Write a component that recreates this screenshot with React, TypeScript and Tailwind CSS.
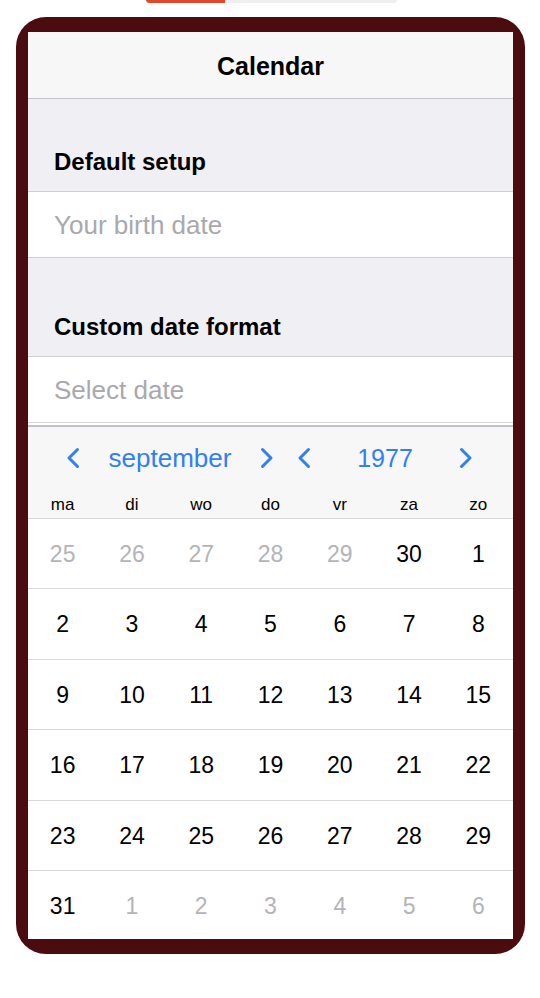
const WEEKDAYS = ['ma', 'di', 'wo', 'do', 'vr', 'za', 'zo'];

// [day, inCurrentMonth]
const WEEKS: [number, boolean][][] = [
  [[25, false], [26, false], [27, false], [28, false], [29, false], [30, true], [1, true]],
  [[2, true], [3, true], [4, true], [5, true], [6, true], [7, true], [8, true]],
  [[9, true], [10, true], [11, true], [12, true], [13, true], [14, true], [15, true]],
  [[16, true], [17, true], [18, true], [19, true], [20, true], [21, true], [22, true]],
  [[23, true], [24, true], [25, true], [26, true], [27, true], [28, true], [29, true]],
  [[31, true], [1, false], [2, false], [3, false], [4, false], [5, false], [6, false]],
];

const ROW_HEIGHTS = ['h-[70px]', 'h-[71px]', 'h-[70px]', 'h-[71px]', 'h-[70px]', 'h-[70px]'];

function Chevron({ dir }: { dir: 'left' | 'right' }) {
  return (
    <button className="w-[30px] h-[30px] flex items-center justify-center shrink-0">
      <svg width="14" height="22" viewBox="0 0 14 22" fill="none">
        <polyline
          points={dir === 'left' ? '11.5,2.5 3,11 11.5,19.5' : '2.5,2.5 11,11 2.5,19.5'}
          stroke="#2f7ff5"
          strokeWidth="3"
          strokeLinecap="round"
          strokeLinejoin="round"
        />
      </svg>
    </button>
  );
}

function SectionHeader({ title, tall }: { title: string; tall?: boolean }) {
  return (
    <div
      className={`${tall ? 'h-[99px]' : 'h-[93px]'} shrink-0 bg-[#efeff4] border-b border-[#cfcfd3] flex items-end px-[26px] pb-[15px]`}
    >
      <span className="text-[24px] leading-[28px] font-bold text-black">{title}</span>
    </div>
  );
}

function InputRow({ placeholder, last }: { placeholder: string; last?: boolean }) {
  return (
    <div className={`h-[66px] shrink-0 bg-white flex items-center px-[26px] ${last ? 'border-b border-[#d6d6d9]' : 'border-b border-[#cfcfd3]'}`}>
      <span className="text-[26px] leading-[30px] text-[#a9a9ad]">{placeholder}</span>
    </div>
  );
}

export default function App() {
  return (
    <div className="min-h-[998px] bg-white" style={{ fontFamily: '"Liberation Sans", Arial, sans-serif' }}>
      {/* partial bar peeking in from above */}
      <div className="ml-[146px] w-[251px] h-[3px] flex rounded-b-full overflow-hidden">
        <div className="w-[79px] bg-[#e3472b] rounded-bl-full" />
        <div className="flex-1 bg-[#efefef]" />
      </div>

      {/* device frame */}
      <div className="ml-[16px] mt-[14px] w-[509px] rounded-[30px] bg-[#4a0c0e] px-[12px] py-[15px]">
        <div className="h-[907px] bg-white overflow-hidden flex flex-col">
          <div className="h-[67px] shrink-0 bg-[#f7f7f7] border-b border-[#c4c4c8] flex items-center justify-center pt-[2px]">
            <span className="text-[25px] leading-[30px] font-bold text-black">Calendar</span>
          </div>

          <SectionHeader title="Default setup" />
          <InputRow placeholder="Your birth date" />
          <SectionHeader title="Custom date format" tall />
          <InputRow placeholder="Select date" last />

          <div className="h-[4px] shrink-0 bg-white border-b-2 border-[#c2c2c6]" />

          {/* calendar */}
          <div className="bg-[#f7f7f7] border-b border-[#d8d8da] shrink-0">
            <div className="h-[62px] flex items-center pl-[30px]">
              <Chevron dir="left" />
              <div className="w-[164px] text-center text-[26px] leading-[30px] text-[#2f7ff5]">september</div>
              <Chevron dir="right" />
              <div className="w-[7px]" />
              <Chevron dir="left" />
              <div className="w-[132px] text-center text-[25px] leading-[30px] text-[#2f7ff5]">1977</div>
              <Chevron dir="right" />
            </div>
            <div className="h-[29px] grid grid-cols-7 items-end pb-[4px]">
              {WEEKDAYS.map((d) => (
                <div key={d} className="text-center text-[17px] leading-[18px] text-black">
                  {d}
                </div>
              ))}
            </div>
          </div>

          <div className="bg-white">
            {WEEKS.map((week, i) => (
              <div
                key={i}
                className={`grid grid-cols-7 items-center ${ROW_HEIGHTS[i]} ${i < WEEKS.length - 1 ? 'border-b border-[#d8d8da]' : ''}`}
              >
                {week.map(([day, current], j) => (
                  <div
                    key={j}
                    className={`text-center text-[23px] leading-[28px] ${current ? 'text-black' : 'text-[#b4b4b8]'}`}
                  >
                    {day}
                  </div>
                ))}
              </div>
            ))}
          </div>
        </div>
      </div>
    </div>
  );
}
